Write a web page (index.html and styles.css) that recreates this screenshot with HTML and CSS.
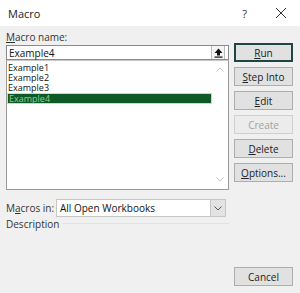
FILE: index.html
```html
<!DOCTYPE html>
<html lang="en">
<head>
    <meta charset="UTF-8">
    <title>Macro</title>
    <link rel="stylesheet" href="styles.css">
</head>
<body>
    <div class="dialog">
        <div class="titlebar">
            <span class="title">Macro</span>
            <span class="help">?</span>
            <svg class="close" width="12" height="12" viewBox="0 0 12 12">
                <path d="M1 1 L11 11 M11 1 L1 11" stroke="#333" stroke-width="1" fill="none"/>
            </svg>
        </div>

        <div class="content">
            <div class="left">
                <label class="lbl"><u>M</u>acro name:</label>
                <div class="name-box">
                    <span>Example4</span>
                    <span class="up-btn">
                        <svg width="9" height="10" viewBox="0 0 9 10">
                            <path d="M4.5 0.5 L8.5 5 L6 5 L6 7.5 L3 7.5 L3 5 L0.5 5 Z" fill="#111"/>
                            <rect x="0.5" y="8.5" width="8" height="1.2" fill="#111"/>
                        </svg>
                    </span>
                </div>
                <div class="list">
                    <div class="items">
                        <div class="item">Example1</div>
                        <div class="item">Example2</div>
                        <div class="item">Example3</div>
                        <div class="item selected">Example4</div>
                    </div>
                    <div class="scroll">
                        <svg width="8" height="5" viewBox="0 0 8 5"><path d="M0.5 4.5 L4 1 L7.5 4.5" stroke="#c4c4c4" fill="none"/></svg>
                        <svg width="8" height="5" viewBox="0 0 8 5"><path d="M0.5 0.5 L4 4 L7.5 0.5" stroke="#c4c4c4" fill="none"/></svg>
                    </div>
                </div>

                <div class="macros-in">
                    <label class="lbl">M<u>a</u>cros in:</label>
                    <div class="select">
                        <span>All Open Workbooks</span>
                        <span class="drop">
                            <svg width="8" height="5" viewBox="0 0 8 5"><path d="M0.5 0.5 L4 4 L7.5 0.5" stroke="#555" fill="none"/></svg>
                        </span>
                    </div>
                </div>
                <div class="desc">
                    <span class="lbl">Description</span>
                    <span class="rule"></span>
                </div>
            </div>

            <div class="buttons">
                <button class="btn default"><u>R</u>un</button>
                <button class="btn"><u>S</u>tep Into</button>
                <button class="btn"><u>E</u>dit</button>
                <button class="btn disabled">Create</button>
                <button class="btn"><u>D</u>elete</button>
                <button class="btn"><u>O</u>ptions...</button>
                <button class="btn cancel">Cancel</button>
            </div>
        </div>
    </div>
</body>
</html>
```

FILE: styles.css
```css
* {
    box-sizing: border-box;
    margin: 0;
    padding: 0;
}

body {
    font-family: "Open Sans", "Noto Sans", sans-serif;
    font-size: 10px;
    color: #222;
    background: #f0f0f0;
}

.dialog {
    width: 300px;
    height: 293px;
    background: #f0f0f0;
    display: flex;
    flex-direction: column;
}

.titlebar {
    height: 26px;
    background: #fff;
    display: flex;
    align-items: center;
    padding: 0 13px 0 8px;
}

.title {
    flex: 1;
    font-size: 11px;
}

.help {
    font-size: 11px;
    margin-right: 28px;
    color: #333;
}

.content {
    flex: 1;
    display: flex;
    padding: 4px 7px 7px 6px;
    gap: 5px;
}

.left {
    width: 223px;
    display: flex;
    flex-direction: column;
}

.lbl {
    color: #333;
    line-height: 13px;
}

.left > .lbl {
    margin-top: 1px;
}

.name-box {
    margin-top: 1px;
    height: 15px;
    background: #fff;
    border: 1px solid #8a8a8a;
    display: flex;
    align-items: center;
    justify-content: space-between;
    padding-left: 2px;
    color: #111;
}

.up-btn {
    width: 14px;
    height: 13px;
    margin-right: 3px;
    background: #f4f4f4;
    border-left: 1px solid #bbb;
    border-right: 1px solid #bbb;
    display: flex;
    align-items: center;
    justify-content: center;
}

.list {
    height: 130px;
    background: #fff;
    border: 1px solid #9a9a9a;
    border-top-color: #c8c8c8;
    display: flex;
}

.items {
    flex: 1;
    padding-top: 2px;
}

.item {
    height: 10px;
    line-height: 10px;
    font-size: 9px;
    padding-left: 1px;
    color: #111;
}

.item.selected {
    background: #0d5a26;
    color: #8ed08e;
    border: 1px solid #d4e08a;
    height: 11px;
    line-height: 9px;
}

.scroll {
    width: 16px;
    display: flex;
    flex-direction: column;
    justify-content: space-between;
    align-items: center;
    padding: 6px 0 7px;
}

.macros-in {
    display: flex;
    align-items: center;
    margin-top: 9px;
}

.macros-in .lbl {
    width: 50px;
}

.select {
    width: 170px;
    height: 18px;
    background: #fff;
    border: 1px solid #c6c6c6;
    display: flex;
    align-items: center;
    justify-content: space-between;
    padding-left: 3px;
    color: #111;
}

.drop {
    width: 15px;
    height: 16px;
    background: #e3e3e3;
    border-left: 1px solid #c6c6c6;
    display: flex;
    align-items: center;
    justify-content: center;
}

.desc {
    display: flex;
    align-items: center;
    margin-top: 1px;
}

.rule {
    flex: 1;
    height: 1px;
    background: #e2e2e2;
    margin-left: 4px;
    margin-bottom: 3px;
}

.buttons {
    flex: 1;
    display: flex;
    flex-direction: column;
    gap: 5px;
    padding-top: 13px;
}

.btn {
    height: 19px;
    font-family: inherit;
    font-size: 10px;
    color: #222;
    background: #e1e1e1;
    border: 1px solid #adadad;
}

.btn.default {
    border: 2px solid #1f4646;
}

.btn.disabled {
    color: #a2a2a2;
    background: #ececec;
    border-color: #cfcfcf;
}

.btn.cancel {
    margin-top: auto;
    margin-bottom: 0;
}
```
